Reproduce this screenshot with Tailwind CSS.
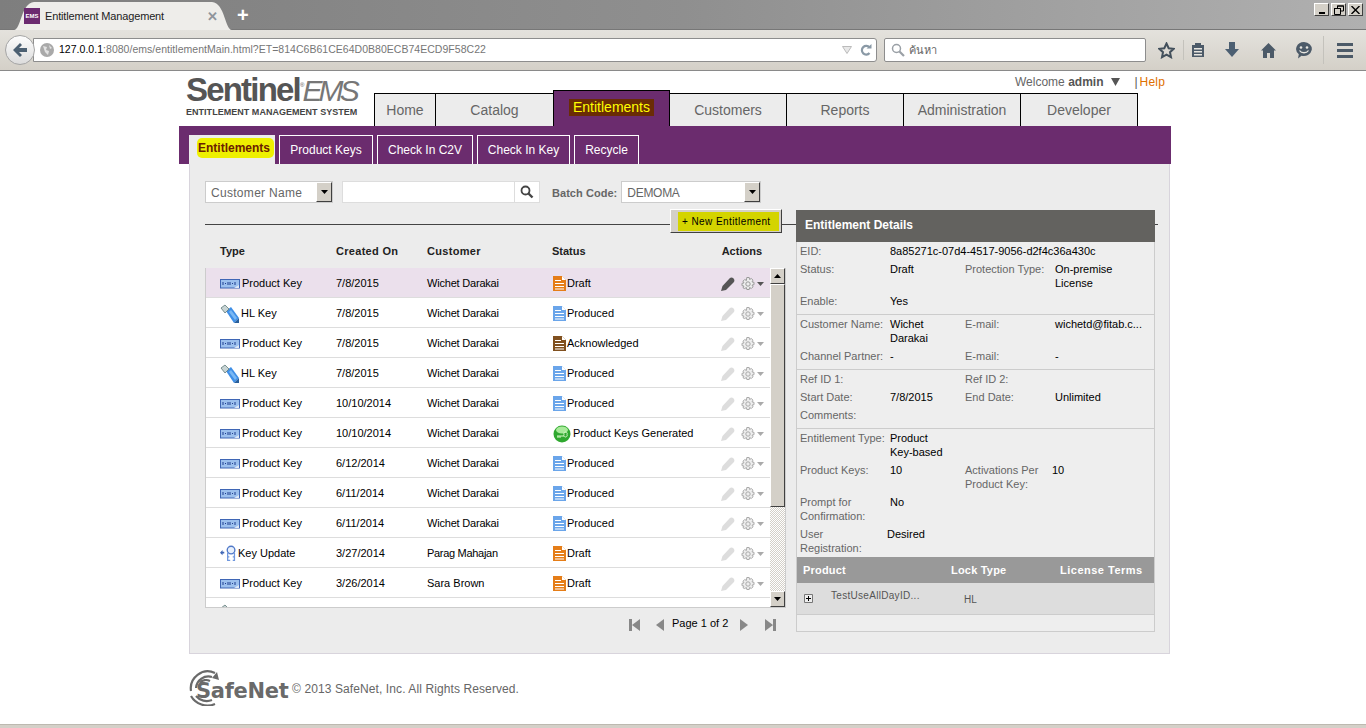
<!DOCTYPE html>
<html lang="en">
<head>
<meta charset="utf-8">
<title>Entitlement Management</title>
<script src="https://cdn.jsdelivr.net/npm/@tailwindcss/browser@4"></script>
</head>
<body class="h-[728px] w-[1366px] overflow-hidden bg-white font-['Liberation_Sans',Arial,sans-serif]">
<svg width="0" height="0" class="absolute">
  <symbol id="pk" viewBox="0 0 20 10"><rect x=".5" y=".5" width="19" height="8.5" fill="#9cc0ee" stroke="#3f66b5"/><path d="M3 3v3M5 4.500h1M8 3v3M10 3v3M12 4.500h1M15 3v3" stroke="#1f3f90" fill="none"/><path d="M14 9l5-3v3z" fill="#dfe8f6"/></symbol>
  <symbol id="hl" viewBox="0 0 20 20"><path d="M6 7l5-4 8 11-5 5z" fill="#3f8fe6"/><path d="M11 6l6 8-2 2-6-8z" fill="#7ab8f4"/><path d="M1 4l4-3 4 4-4 4z" fill="#c8d4d4" stroke="#5f7a7a" stroke-width=".8"/><path d="M14 19l5-5v5z" fill="#285f9c"/></symbol>
  <symbol id="ku" viewBox="0 0 20 20"><path d="M0 9l3-3v2h2v2H3v2z" fill="#3f66b5"/><circle cx="13" cy="6" r="4.500" fill="#e8f0fb" stroke="#4f78c8" stroke-width="1.600"/><path d="M9 9v9h3M17 9v9h-2M9 14h2M17 14h-2" fill="none" stroke="#6f97de" stroke-width="1.500"/></symbol>
  <symbol id="doc" viewBox="0 0 13 15"><path d="M0 0h9l4 4v11H0z" fill="currentColor"/><path d="M9 0l4 4H9z" fill="#fff"/><path d="M2 4.500h6M2 7.500h9M2 10.500h9M2 13h9" stroke="#fff" fill="none"/></symbol>
  <symbol id="pen" viewBox="0 0 14 14"><path d="M0 14l1.500-5 7-7.500c1.200-1.200 2.800-1.200 4 0s1.200 2.800 0 4L5 13z" fill="currentColor"/></symbol>
  <symbol id="gear" viewBox="0 0 14 14"><path d="M5.800 .5h2.400l.4 2 1.700-1 1.700 1.700-1 1.700 2 .4v2.400l-2 .4 1 1.700-1.700 1.700-1.700-1-.4 2H5.800l-.4-2-1.700 1L2 10.800l1-1.700-2-.4V6.300l2-.4L2 4.200 3.700 2.500l1.700 1z" fill="#eee" stroke="currentColor" stroke-width="1"/><circle cx="7" cy="7" r="2.200" fill="none" stroke="currentColor"/></symbol>
  <symbol id="globe" viewBox="0 0 18 18"><circle cx="9" cy="9" r="8.500" fill="#2fa82f"/><ellipse cx="9" cy="5" rx="6" ry="3.500" fill="#a8ea9a"/><path d="M4 11h7M11 9.500a1.700 1.700 0 1 0 3 0a1.700 1.700 0 1 0-3 0M5 11v2M7 11v2" stroke="#d8f8c8" fill="none"/></symbol>
</svg>

<!-- browser chrome -->
<header class="h-[71px] border-b border-[#8a8a8a]">
  <div class="flex h-[30px] items-end border-b border-[#777] bg-gradient-to-r from-[#7e7e7e] via-[#8f8f8f] to-[#b0b0b0] pl-[14px]">
    <div class="relative flex h-[28px] w-[218px] items-center pl-[10px] pr-[14px] -mb-px">
      <svg class="absolute inset-0 h-[28px] w-[218px]" viewBox="0 0 218 28"><path d="M0 28C7 28 7 1 20 0H198c13 1 13 28 20 28Z" fill="#eeedea"/></svg>
      <span class="relative flex h-[16px] w-[16px] items-center justify-center bg-[#6b2a70] text-[6px] font-bold leading-none text-white">EMS</span>
      <span class="relative ml-[5px] flex-1 text-[11px] tracking-[-.15px] text-[#222]">Entitlement Management</span>
      <span class="relative text-[13px] font-bold leading-none text-[#8f949b]">✕</span>
    </div>
    <span class="mb-[4px] ml-[5px] text-[20px] font-bold leading-none text-white">+</span>
    <div class="ml-auto mb-[13px] mr-[3px] flex gap-[2px]">
      <span class="flex h-[13px] w-[15px] items-end justify-center border border-t-white border-l-white border-r-[#404040] border-b-[#404040] bg-[#d4d0c8] pb-[1px]"><i class="block h-[2px] w-[6px] bg-black"></i></span>
      <span class="flex h-[13px] w-[15px] items-center justify-center border border-t-white border-l-white border-r-[#404040] border-b-[#404040] bg-[#d4d0c8]"><svg class="h-[10px] w-[10px]" viewBox="0 0 10 10"><path d="M3.500 3V1h6v5H7M.5 3.500h6v6h-6z" fill="none" stroke="#000"/><path d="M3 1h7M0 3.500h7" stroke="#000"/></svg></span>
      <span class="flex h-[13px] w-[15px] items-center justify-center border border-t-white border-l-white border-r-[#404040] border-b-[#404040] bg-[#d4d0c8]"><svg class="h-[8px] w-[9px]" viewBox="0 0 9 8"><path d="M.5 0l8 8M8.500 0l-8 8" stroke="#000" stroke-width="1.400"/></svg></span>
    </div>
  </div>
  <div class="flex h-[40px] items-center bg-gradient-to-b from-[#e4e2dd] to-[#d4d0c8] pl-[5px]">
    <div class="relative z-10 flex h-[30px] w-[30px] items-center justify-center rounded-full border border-[#a5a5a5] bg-gradient-to-b from-[#fdfdfd] to-[#dcdcdc]">
      <svg class="h-[16px] w-[16px]" viewBox="0 0 16 16"><path d="M8 1l2 2-3 3h8v4H7l3 3-2 2-7-7z" fill="#4c6072"/></svg>
    </div>
    <div class="-ml-[2px] flex h-[24px] w-[844px] items-center rounded-r-[3px] border border-[#8d8d8d] bg-white pl-[6px] pr-[4px]">
      <svg class="h-[14px] w-[14px]" viewBox="0 0 14 14"><circle cx="7" cy="7" r="7" fill="#a9a9a9"/><path d="M3 3l4 1-1 3 3 1-1 4-3-3zM9 2l3 3-2 1z" fill="#e2e2e2"/></svg>
      <span class="ml-[5px] flex-1 text-[10.500px] tracking-[.03px] text-[#767676]"><span class="text-black">127.0.0.1</span>:8080/ems/entitlementMain.html?ET=814C6B61CE64D0B80ECB74ECD9F58C22</span>
      <svg class="mr-[7px] h-[8px] w-[10px]" viewBox="0 0 10 8"><path d="M.5.5h9L5 7.500z" fill="#e8e8e8" stroke="#bbb"/></svg>
      <svg class="h-[14px] w-[13px]" viewBox="0 0 12 14"><path d="M10 4.500A4.300 4.300 0 1 0 10 10" fill="none" stroke="#8a99a6" stroke-width="2.200"/><path d="M7 5.500h5V1z" fill="#8a99a6"/></svg>
    </div>
    <div class="ml-[7px] flex h-[24px] w-[262px] items-center rounded-[2px] border border-[#8d8d8d] bg-white pl-[6px]">
      <svg class="h-[14px] w-[14px]" viewBox="0 0 14 14"><circle cx="5.500" cy="5.500" r="4" fill="none" stroke="#9aa0a6" stroke-width="1.500"/><path d="M8.500 8.500l4.500 4.500" stroke="#9aa0a6" stroke-width="2.200"/></svg>
      <span class="ml-[4px] font-['Noto_Sans','DejaVu_Sans',sans-serif] text-[11px] text-[#666]">ค้นหา</span>
    </div>
    <div class="flex items-center">
      <svg class="ml-[12px] h-[17px] w-[17px]" viewBox="0 0 17 17"><path d="M8.500 1.500l2.200 4.700 5 .6-3.700 3.400 1 5-4.500-2.500L4 15.200l1-5L1.300 6.800l5-.6z" fill="none" stroke="#43505c" stroke-width="2"/></svg>
      <i class="ml-[8px] block h-[20px] w-px bg-[#c4c2bc]"></i>
      <svg class="ml-[7px] h-[16px] w-[14px]" viewBox="0 0 14 16"><path d="M1 3h3V1h6v2h3v12H1z" fill="#4c5a68"/><path d="M3 6h8v1.500H3zM3 9h8v1.500H3zM3 12h8v1.500H3z" fill="#e8e6e0"/></svg>
      <svg class="ml-[20px] h-[16px] w-[14px]" viewBox="0 0 14 16"><path d="M4 0h6v7h4l-7 8-7-8h4z" fill="#4c5f72"/></svg>
      <svg class="ml-[22px] h-[15px] w-[15px]" viewBox="0 0 15 15"><path d="M7.500 0L15 7.500h-2V15H9v-5H6v5H2V7.500H0z" fill="#4c5a68"/></svg>
      <svg class="ml-[20px] h-[17px] w-[16px]" viewBox="0 0 16 17"><path d="M8 0a8 7 0 1 1-2.500 13.700L2 16.500l.8-4.300A8 7 0 0 1 8 0z" fill="#4c5a68"/><circle cx="5" cy="5.500" r="1.300" fill="#e8e6e0"/><circle cx="11" cy="5.500" r="1.300" fill="#e8e6e0"/><path d="M3.500 8.500c2 3 7 3 9 0" stroke="#e8e6e0" fill="none" stroke-width="1.300"/></svg>
      <i class="ml-[11px] block h-[28px] w-px bg-[#c4c2bc]"></i>
      <span class="ml-[13px] flex w-[16px] flex-col gap-[3px]"><i class="block h-[3px] bg-[#4c5a68]"></i><i class="block h-[3px] bg-[#4c5a68]"></i><i class="block h-[3px] bg-[#4c5a68]"></i></span>
    </div>
  </div>
</header>

<div class="flex h-[653px] flex-col">
<main class="ml-[179px] w-[992px]">
  <!-- masthead -->
  <div class="relative flex h-[55px] items-end">
    <div class="mb-[9px] ml-[7px] w-[188px] text-[#555]">
      <div class="flex items-baseline whitespace-nowrap leading-[28px]"><span class="text-[33px] font-bold tracking-[-1.800px]">Sentinel</span><span class="relative -top-[14px] text-[6px] leading-none">®</span><span class="-ml-[2px] text-[30px] font-light italic tracking-[-3.800px] text-[#777]">EMS</span></div>
      <div class="mt-[2px] whitespace-nowrap text-[9px] font-bold leading-[10px] tracking-[.03px] text-[#444]">ENTITLEMENT MANAGEMENT SYSTEM</div>
    </div>
    <nav class="flex h-[33px] items-stretch">
      <a class="flex w-[62px] items-center justify-center border border-b-0 border-black bg-[#ececec] pt-[1px] text-[14px] text-[#666]">Home</a>
      <a class="-ml-px flex w-[119px] items-center justify-center border border-b-0 border-black bg-[#ececec] pt-[1px] text-[14px] text-[#666]">Catalog</a>
      <a class="relative -ml-px -mt-[3px] flex w-[117px] items-center justify-center border border-b-0 border-black bg-[#6b2c6e] text-[14px] text-[#ffff00]"><span class="mb-[2px] bg-[#6a2c05] px-[4px] leading-[17px]">Entitlements</span></a>
      <a class="flex w-[117px] items-center justify-center border border-b-0 border-l-0 border-black bg-[#ececec] pt-[1px] text-[14px] text-[#666]">Customers</a>
      <a class="-ml-px flex w-[118px] items-center justify-center border border-b-0 border-black bg-[#ececec] pt-[1px] text-[14px] text-[#666]">Reports</a>
      <a class="-ml-px flex w-[118px] items-center justify-center border border-b-0 border-black bg-[#ececec] pt-[1px] text-[14px] text-[#666]">Administration</a>
      <a class="-ml-px flex w-[118px] items-center justify-center border border-b-0 border-black bg-[#ececec] pt-[1px] text-[14px] text-[#666]">Developer</a>
    </nav>
    <div class="absolute left-[836px] top-[1px] flex items-center whitespace-nowrap text-[12px] text-[#666]">
      <span>Welcome <b class="text-[#555]">admin</b></span>
      <svg class="ml-[8px] h-[8px] w-[9px]" viewBox="0 0 9 8"><path d="M0 0h9L4.500 8z" fill="#555"/></svg>
      <span class="ml-[14px] text-[#555]">|</span><span class="ml-[2px] pt-[1px] tracking-[.2px] text-[#e07000]">Help</span>
    </div>
  </div>

  <!-- purple bar -->
  <div class="flex h-[38px] items-end gap-[4px] bg-[#6b2c6e] pl-[10px]">
    <a class="relative flex h-[29px] w-[86px] items-start bg-[#ececec] pl-[8px] pt-[3px]"><span class="rounded-[5px] bg-[#eef000] pl-[1px] pr-[4px] text-[12px] font-bold leading-[20px] text-[#6b2000]">Entitlements</span></a>
    <a class="flex h-[29px] w-[94px] items-center justify-center border border-b-0 border-white text-[12px] text-white">Product Keys</a>
    <a class="flex h-[29px] w-[96px] items-center justify-center border border-b-0 border-white text-[12px] text-white">Check In C2V</a>
    <a class="flex h-[29px] w-[93px] items-center justify-center border border-b-0 border-white text-[12px] text-white">Check In Key</a>
    <a class="flex h-[29px] w-[65px] items-center justify-center border border-b-0 border-white text-[12px] text-white">Recycle</a>
  </div>

  <!-- panel -->
  <section class="relative ml-[10px] h-[490px] w-[981px] border-x border-b border-[#d8d4dc] bg-[#ececec] pl-[15px] pt-[17px]">
    <i class="absolute left-[15px] top-[60px] block h-px w-[953px] bg-[#444]"></i>
    <!-- filter -->
    <div class="flex h-[22px] items-center">
      <div class="flex h-[22px] w-[128px] items-center justify-between border border-[#ccc] bg-white pl-[5px] text-[12px] text-[#666]"><span class="pt-[1px] tracking-[.3px]">Customer Name</span>
        <span class="flex h-[20px] w-[16px] items-center justify-center border border-t-white border-l-white border-r-[#404040] border-b-[#404040] bg-[#d4d0c8]"><svg class="h-[4px] w-[7px]" viewBox="0 0 7 4"><path d="M0 0h7L3.500 4z" fill="#000"/></svg></span>
      </div>
      <div class="ml-[9px] flex h-[22px] w-[198px] justify-end border border-[#ddd] bg-white">
        <span class="flex w-[25px] items-center justify-center border-l border-[#ddd]"><svg class="h-[14px] w-[14px]" viewBox="0 0 14 14"><circle cx="5.500" cy="5.500" r="4" fill="none" stroke="#444" stroke-width="1.800"/><path d="M8.500 8.500l4 4" stroke="#444" stroke-width="2.400"/></svg></span>
      </div>
      <b class="ml-[12px] pt-[3px] text-[11px] tracking-[.05px] text-[#666]">Batch Code:</b>
      <div class="ml-[4px] flex h-[22px] w-[140px] items-center justify-between border border-[#ccc] bg-white pl-[5px] text-[12px] text-[#666]"><span class="pt-[1px] tracking-[-.3px]">DEMOMA</span>
        <span class="flex h-[20px] w-[16px] items-center justify-center border border-t-white border-l-white border-r-[#404040] border-b-[#404040] bg-[#d4d0c8]"><svg class="h-[4px] w-[7px]" viewBox="0 0 7 4"><path d="M0 0h7L3.500 4z" fill="#000"/></svg></span>
      </div>
    </div>

    <div class="mt-[6px] flex items-start">
      <!-- list -->
      <div class="w-[581px]">
        <div class="flex h-[24px] justify-end">
          <button class="relative z-10 mr-[4px] flex h-[24px] w-[112px] items-center border border-t-white border-l-white border-r-[#404040] border-b-[#404040] bg-[#d4d0c8] pl-[7px]"><span class="mt-[1px] whitespace-nowrap bg-[#d4d400] pl-[4px] pr-[8px] text-[10px] leading-[19px] tracking-[.42px] text-black">+ New Entitlement</span></button>
        </div>
        <div class="grid h-[35px] grid-cols-[116px_91px_126px_1fr] items-center pl-[15px] text-[11px] font-bold leading-none text-[#222]">
          <span class="pt-[2px]">Type</span><span class="pt-[2px] tracking-[.3px]">Created On</span><span class="pt-[2px] tracking-[.3px]">Customer</span><span class="-ml-px flex justify-between pr-[24px] pt-[2px]"><span>Status</span><span>Actions</span></span>
        </div>
        <div class="flex h-[340px] overflow-hidden border-x border-b border-[#ccc] bg-white">
          <div class="w-[564px] text-[11px] text-black">
            <div class="grid h-[30px] grid-cols-[116px_91px_126px_1fr] items-center border-b border-[#ddd] bg-[#ebe0ec] pl-[14px] pt-[2px]">
              <span class="flex items-center"><svg class="mr-[2px] h-[10px] w-[20px]"><use href="#pk"/></svg>Product Key</span><span>7/8/2015</span><span class="tracking-[-.2px]">Wichet Darakai</span>
              <span class="flex items-center"><svg class="mr-[1px] h-[15px] w-[13px] text-[#e57d17]"><use href="#doc"/></svg>Draft<span class="ml-auto mr-[6px] flex items-center"><svg class="h-[14px] w-[14px] text-[#555]"><use href="#pen"/></svg><svg class="ml-[6px] h-[14px] w-[14px] text-[#999]"><use href="#gear"/></svg><svg class="ml-[2px] h-[4px] w-[7px]" viewBox="0 0 7 4"><path d="M0 0h7L3.500 4z" fill="#555"/></svg></span></span>
            </div>
            <div class="grid h-[30px] grid-cols-[116px_91px_126px_1fr] items-center border-b border-[#ddd] pl-[14px] pt-[2px]">
              <span class="flex items-center"><svg class="mr-[1px] h-[20px] w-[20px]"><use href="#hl"/></svg>HL Key</span><span>7/8/2015</span><span class="tracking-[-.2px]">Wichet Darakai</span>
              <span class="flex items-center"><svg class="mr-[1px] h-[15px] w-[13px] text-[#6aa5ea]"><use href="#doc"/></svg>Produced<span class="ml-auto mr-[6px] flex items-center"><svg class="h-[14px] w-[14px] text-[#ddd]"><use href="#pen"/></svg><svg class="ml-[6px] h-[14px] w-[14px] text-[#aaa]"><use href="#gear"/></svg><svg class="ml-[2px] h-[4px] w-[7px]" viewBox="0 0 7 4"><path d="M0 0h7L3.500 4z" fill="#aaa"/></svg></span></span>
            </div>
            <div class="grid h-[30px] grid-cols-[116px_91px_126px_1fr] items-center border-b border-[#ddd] pl-[14px] pt-[2px]">
              <span class="flex items-center"><svg class="mr-[2px] h-[10px] w-[20px]"><use href="#pk"/></svg>Product Key</span><span>7/8/2015</span><span class="tracking-[-.2px]">Wichet Darakai</span>
              <span class="flex items-center"><svg class="mr-[1px] h-[15px] w-[13px] text-[#80501f]"><use href="#doc"/></svg>Acknowledged<span class="ml-auto mr-[6px] flex items-center"><svg class="h-[14px] w-[14px] text-[#ddd]"><use href="#pen"/></svg><svg class="ml-[6px] h-[14px] w-[14px] text-[#aaa]"><use href="#gear"/></svg><svg class="ml-[2px] h-[4px] w-[7px]" viewBox="0 0 7 4"><path d="M0 0h7L3.500 4z" fill="#aaa"/></svg></span></span>
            </div>
            <div class="grid h-[30px] grid-cols-[116px_91px_126px_1fr] items-center border-b border-[#ddd] pl-[14px] pt-[2px]">
              <span class="flex items-center"><svg class="mr-[1px] h-[20px] w-[20px]"><use href="#hl"/></svg>HL Key</span><span>7/8/2015</span><span class="tracking-[-.2px]">Wichet Darakai</span>
              <span class="flex items-center"><svg class="mr-[1px] h-[15px] w-[13px] text-[#6aa5ea]"><use href="#doc"/></svg>Produced<span class="ml-auto mr-[6px] flex items-center"><svg class="h-[14px] w-[14px] text-[#ddd]"><use href="#pen"/></svg><svg class="ml-[6px] h-[14px] w-[14px] text-[#aaa]"><use href="#gear"/></svg><svg class="ml-[2px] h-[4px] w-[7px]" viewBox="0 0 7 4"><path d="M0 0h7L3.500 4z" fill="#aaa"/></svg></span></span>
            </div>
            <div class="grid h-[30px] grid-cols-[116px_91px_126px_1fr] items-center border-b border-[#ddd] pl-[14px] pt-[2px]">
              <span class="flex items-center"><svg class="mr-[2px] h-[10px] w-[20px]"><use href="#pk"/></svg>Product Key</span><span>10/10/2014</span><span class="tracking-[-.2px]">Wichet Darakai</span>
              <span class="flex items-center"><svg class="mr-[1px] h-[15px] w-[13px] text-[#6aa5ea]"><use href="#doc"/></svg>Produced<span class="ml-auto mr-[6px] flex items-center"><svg class="h-[14px] w-[14px] text-[#ddd]"><use href="#pen"/></svg><svg class="ml-[6px] h-[14px] w-[14px] text-[#aaa]"><use href="#gear"/></svg><svg class="ml-[2px] h-[4px] w-[7px]" viewBox="0 0 7 4"><path d="M0 0h7L3.500 4z" fill="#aaa"/></svg></span></span>
            </div>
            <div class="grid h-[30px] grid-cols-[116px_91px_126px_1fr] items-center border-b border-[#ddd] pl-[14px] pt-[2px]">
              <span class="flex items-center"><svg class="mr-[2px] h-[10px] w-[20px]"><use href="#pk"/></svg>Product Key</span><span>10/10/2014</span><span class="tracking-[-.2px]">Wichet Darakai</span>
              <span class="flex items-center"><svg class="mr-[2px] h-[18px] w-[18px]"><use href="#globe"/></svg>Product Keys Generated<span class="ml-auto mr-[6px] flex items-center"><svg class="h-[14px] w-[14px] text-[#ddd]"><use href="#pen"/></svg><svg class="ml-[6px] h-[14px] w-[14px] text-[#aaa]"><use href="#gear"/></svg><svg class="ml-[2px] h-[4px] w-[7px]" viewBox="0 0 7 4"><path d="M0 0h7L3.500 4z" fill="#aaa"/></svg></span></span>
            </div>
            <div class="grid h-[30px] grid-cols-[116px_91px_126px_1fr] items-center border-b border-[#ddd] pl-[14px] pt-[2px]">
              <span class="flex items-center"><svg class="mr-[2px] h-[10px] w-[20px]"><use href="#pk"/></svg>Product Key</span><span>6/12/2014</span><span class="tracking-[-.2px]">Wichet Darakai</span>
              <span class="flex items-center"><svg class="mr-[1px] h-[15px] w-[13px] text-[#6aa5ea]"><use href="#doc"/></svg>Produced<span class="ml-auto mr-[6px] flex items-center"><svg class="h-[14px] w-[14px] text-[#ddd]"><use href="#pen"/></svg><svg class="ml-[6px] h-[14px] w-[14px] text-[#aaa]"><use href="#gear"/></svg><svg class="ml-[2px] h-[4px] w-[7px]" viewBox="0 0 7 4"><path d="M0 0h7L3.500 4z" fill="#aaa"/></svg></span></span>
            </div>
            <div class="grid h-[30px] grid-cols-[116px_91px_126px_1fr] items-center border-b border-[#ddd] pl-[14px] pt-[2px]">
              <span class="flex items-center"><svg class="mr-[2px] h-[10px] w-[20px]"><use href="#pk"/></svg>Product Key</span><span>6/11/2014</span><span class="tracking-[-.2px]">Wichet Darakai</span>
              <span class="flex items-center"><svg class="mr-[1px] h-[15px] w-[13px] text-[#6aa5ea]"><use href="#doc"/></svg>Produced<span class="ml-auto mr-[6px] flex items-center"><svg class="h-[14px] w-[14px] text-[#ddd]"><use href="#pen"/></svg><svg class="ml-[6px] h-[14px] w-[14px] text-[#aaa]"><use href="#gear"/></svg><svg class="ml-[2px] h-[4px] w-[7px]" viewBox="0 0 7 4"><path d="M0 0h7L3.500 4z" fill="#aaa"/></svg></span></span>
            </div>
            <div class="grid h-[30px] grid-cols-[116px_91px_126px_1fr] items-center border-b border-[#ddd] pl-[14px] pt-[2px]">
              <span class="flex items-center"><svg class="mr-[2px] h-[10px] w-[20px]"><use href="#pk"/></svg>Product Key</span><span>6/11/2014</span><span class="tracking-[-.2px]">Wichet Darakai</span>
              <span class="flex items-center"><svg class="mr-[1px] h-[15px] w-[13px] text-[#6aa5ea]"><use href="#doc"/></svg>Produced<span class="ml-auto mr-[6px] flex items-center"><svg class="h-[14px] w-[14px] text-[#ddd]"><use href="#pen"/></svg><svg class="ml-[6px] h-[14px] w-[14px] text-[#aaa]"><use href="#gear"/></svg><svg class="ml-[2px] h-[4px] w-[7px]" viewBox="0 0 7 4"><path d="M0 0h7L3.500 4z" fill="#aaa"/></svg></span></span>
            </div>
            <div class="grid h-[30px] grid-cols-[116px_91px_126px_1fr] items-center border-b border-[#ddd] pl-[14px] pt-[2px]">
              <span class="flex items-center"><svg class="mr-[1px] h-[17px] w-[17px]"><use href="#ku"/></svg>Key Update</span><span>3/27/2014</span><span class="tracking-[-.3px]">Parag Mahajan</span>
              <span class="flex items-center"><svg class="mr-[1px] h-[15px] w-[13px] text-[#e57d17]"><use href="#doc"/></svg>Draft<span class="ml-auto mr-[6px] flex items-center"><svg class="h-[14px] w-[14px] text-[#ddd]"><use href="#pen"/></svg><svg class="ml-[6px] h-[14px] w-[14px] text-[#aaa]"><use href="#gear"/></svg><svg class="ml-[2px] h-[4px] w-[7px]" viewBox="0 0 7 4"><path d="M0 0h7L3.500 4z" fill="#aaa"/></svg></span></span>
            </div>
            <div class="grid h-[30px] grid-cols-[116px_91px_126px_1fr] items-center border-b border-[#ddd] pl-[14px] pt-[2px]">
              <span class="flex items-center"><svg class="mr-[2px] h-[10px] w-[20px]"><use href="#pk"/></svg>Product Key</span><span>3/26/2014</span><span>Sara Brown</span>
              <span class="flex items-center"><svg class="mr-[1px] h-[15px] w-[13px] text-[#e57d17]"><use href="#doc"/></svg>Draft<span class="ml-auto mr-[6px] flex items-center"><svg class="h-[14px] w-[14px] text-[#ddd]"><use href="#pen"/></svg><svg class="ml-[6px] h-[14px] w-[14px] text-[#aaa]"><use href="#gear"/></svg><svg class="ml-[2px] h-[4px] w-[7px]" viewBox="0 0 7 4"><path d="M0 0h7L3.500 4z" fill="#aaa"/></svg></span></span>
            </div>
            <div class="grid h-[30px] grid-cols-[116px_91px_126px_1fr] items-center pl-[14px] pt-[2px]">
              <span class="flex items-center"><svg class="h-[20px] w-[20px]"><use href="#hl"/></svg></span><span></span><span></span>
              <span class="flex items-center"><svg class="h-[15px] w-[13px] text-[#80501f]"><use href="#doc"/></svg></span>
            </div>
          </div>
          <!-- scrollbar -->
          <div class="flex w-[15px] flex-col bg-[repeating-conic-gradient(#d4d0c8_0_25%,#fff_0_50%)] bg-[length:2px_2px]">
            <span class="flex h-[16px] items-center justify-center border border-t-white border-l-white border-r-[#404040] border-b-[#404040] bg-[#d4d0c8]"><svg class="h-[4px] w-[7px]" viewBox="0 0 7 4"><path d="M3.500 0L7 4H0z" fill="#000"/></svg></span>
            <span class="h-[223px] border border-t-white border-l-white border-r-[#404040] border-b-[#404040] bg-[#d4d0c8]"></span>
            <span class="mt-auto flex h-[16px] items-center justify-center border border-t-white border-l-white border-r-[#404040] border-b-[#404040] bg-[#d4d0c8]"><svg class="h-[4px] w-[7px]" viewBox="0 0 7 4"><path d="M0 0h7L3.500 4z" fill="#000"/></svg></span>
          </div>
        </div>
        <!-- pager -->
        <div class="mt-[9px] flex h-[16px] items-center pl-[424px] text-[11px] text-black">
          <svg class="h-[12px] w-[11px]" viewBox="0 0 11 12"><path d="M0 0h3v12H0zM3 6l8-6v12z" fill="#888"/></svg>
          <svg class="ml-[15px] h-[12px] w-[9px]" viewBox="0 0 9 12"><path d="M9 0v12L1 6z" fill="#888"/></svg>
          <span class="-mt-[3px] ml-[8px] w-[68px]">Page 1 of 2</span>
          <svg class="h-[12px] w-[9px]" viewBox="0 0 9 12"><path d="M0 0v12l8-6z" fill="#888"/></svg>
          <svg class="ml-[16px] h-[12px] w-[11px]" viewBox="0 0 11 12"><path d="M8 0h3v12H8zM8 6L0 0v12z" fill="#888"/></svg>
        </div>
      </div>
      <!-- details -->
      <aside class="relative z-10 ml-[10px] mt-[1px] h-[422px] w-[359px] border-x border-b border-[#ccc] bg-[#eee] text-[11px] leading-[14px]">
        <h2 class="-mx-px flex h-[32px] items-center bg-[#63625f] pb-[2px] pl-[9px] text-[12px] font-bold text-white">Entitlement Details</h2>
        <div class="grid grid-cols-[90px_75px_90px_1fr] gap-y-[4px] border-b border-[#ccc] pb-[6px] pl-[3px] pt-[2px] text-[#666]">
          <span>EID:</span><span class="col-span-3 -mb-px text-black">8a85271c-07d4-4517-9056-d2f4c36a430c</span>
          <span>Status:</span><span class="text-black">Draft</span><span>Protection Type:</span><span class="w-[70px] text-black">On-premise License</span>
          <span>Enable:</span><span class="col-span-3 text-black">Yes</span>
        </div>
        <div class="grid grid-cols-[90px_75px_90px_1fr] gap-y-[4px] border-b border-[#ccc] pb-[6px] pl-[3px] pt-[2px] text-[#666]">
          <span>Customer Name:</span><span class="w-[50px] text-black">Wichet Darakai</span><span>E-mail:</span><span class="text-black">wichetd@fitab.c...</span>
          <span>Channel Partner:</span><span class="text-black">-</span><span>E-mail:</span><span class="text-black">-</span>
        </div>
        <div class="grid grid-cols-[90px_75px_90px_1fr] gap-y-[4px] border-b border-[#ccc] pb-[6px] pl-[3px] pt-[2px] text-[#666]">
          <span>Ref ID 1:</span><span></span><span>Ref ID 2:</span><span></span>
          <span>Start Date:</span><span class="text-black">7/8/2015</span><span>End Date:</span><span class="text-black">Unlimited</span>
          <span class="col-span-4">Comments:</span>
        </div>
        <div class="grid grid-cols-[90px_75px_90px_1fr] gap-y-[4px] pb-[2px] pl-[3px] pt-[2px] text-[#666]">
          <span>Entitlement Type:</span><span class="w-[60px] text-black">Product Key-based</span><span></span><span></span>
          <span>Product Keys:</span><span class="text-black">10</span><span class="w-[80px]">Activations Per Product Key:</span><span class="-ml-[3px] text-black">10</span>
          <span class="w-[70px]">Prompt for Confirmation:</span><span class="col-span-3 text-black">No</span>
          <span class="w-[70px]">User Registration:</span><span class="col-span-3 -ml-[3px] text-black">Desired</span>
        </div>
        <div class="grid h-[26px] grid-cols-[148px_109px_1fr] items-center bg-[#999] pl-[6px] text-[11px] font-bold tracking-[.2px] text-white">
          <span>Product</span><span>Lock Type</span><span class="tracking-[.5px]">License Terms</span>
        </div>
        <div class="grid h-[32px] grid-cols-[27px_133px_1fr] items-center border-b border-[#ccc] bg-[#ddd] pl-[7px] text-[10px] text-[#555]">
          <svg class="h-[9px] w-[9px]" viewBox="0 0 9 9"><path d="M.5.500h8v8h-8z" fill="#eee" stroke="#777"/><path d="M2 4.500h5M4.500 2v5" stroke="#000"/></svg>
          <span class="-mt-[6px] tracking-[.3px]">TestUseAllDayID...</span><span class="mt-[2px]">HL</span>
        </div>
      </aside>
    </div>
  </section>

  <!-- footer -->
  <footer class="ml-[9px] mt-[14px] flex h-[38px] items-center">
    <div class="relative h-[38px] w-[104px]">
      <svg class="absolute left-0 top-0 h-[38px] w-[38px]" viewBox="0 0 38 38"><path d="M3 23A17 17 0 0 1 27 5M8 20A12.500 12.500 0 0 1 24 9M12 15A8 8 0 0 1 22 13M3 28A19 19 0 0 0 27 36M8 28A14 14 0 0 0 24 32" fill="none" stroke="#6a6a6a" stroke-width="2.200"/><path d="M31 12l-7-2 5-6z" fill="#6a6a6a"/></svg>
      <span class="absolute left-[8px] top-[10px] whitespace-nowrap font-['DejaVu_Sans',sans-serif] text-[21px] font-bold leading-[26px] tracking-[-.3px] text-[#6a6a6a]">SafeNet</span>
    </div>
    <span class="pt-[3px] text-[12px] tracking-[.1px] text-[#666]">© 2013 SafeNet, Inc. All Rights Reserved.</span>
  </footer>
</main>
</div>
<div class="h-[4px] border-t border-[#bdb9b0] bg-[#d4d0c8]"></div>
</body>
</html>
